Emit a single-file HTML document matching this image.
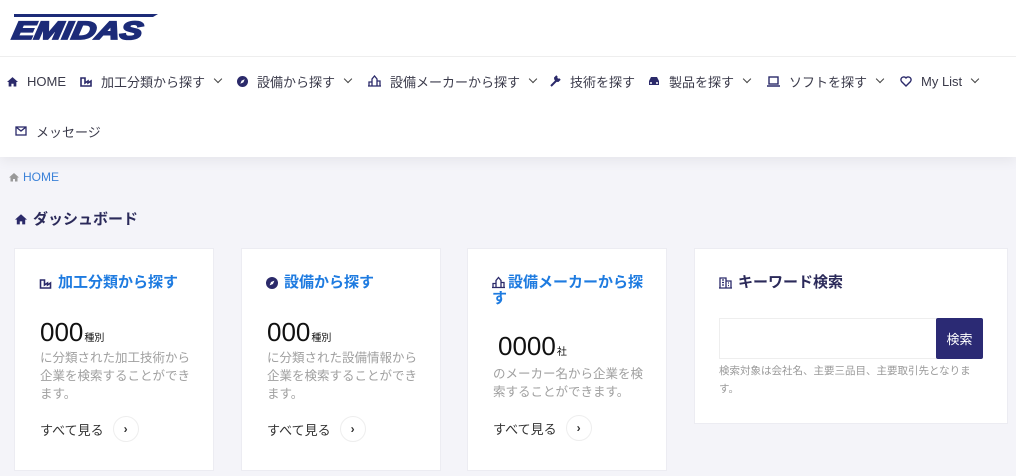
<!DOCTYPE html>
<html><head><meta charset="utf-8"><style>
*{margin:0;padding:0;box-sizing:border-box}
body{width:1016px;height:476px;overflow:hidden;background:#f4f4f9;font-family:"Liberation Sans","Noto Sans CJK JP",sans-serif;color:#333;position:relative}
.hdr{position:absolute;left:0;top:0;width:1016px;height:157px;background:#fff;box-shadow:0 4px 12px rgba(0,0,0,.06)}
.line{position:absolute;left:0;top:56px;width:1016px;height:1px;background:#eee}
.nav{position:absolute;font-size:13px;color:#3a3a4a;white-space:nowrap;display:flex;align-items:center;height:16px}
.nav svg{margin-right:9px}
.chev{display:inline-block;width:6px;height:6px;border-right:1.5px solid #444;border-bottom:1.5px solid #444;transform:rotate(45deg);margin-left:10px;margin-top:-4px}
.card{position:absolute;background:#fff;border:1px solid #ececf2}
.ct{position:absolute;left:24px;top:26px;font-size:15px;font-weight:bold;color:#1e7be0;line-height:16px;display:flex}
.num{position:absolute;left:25px;top:68px;font-size:26px;color:#111}
.num small{font-size:10px;margin-left:1px}
.desc{position:absolute;left:25px;font-size:12.5px;color:#a0a0a0;line-height:18px;width:160px}
.more{position:absolute;left:25px;font-size:13px;color:#333;display:flex;align-items:center}
.circ{width:26px;height:26px;border-radius:50%;border:1px solid #eee;margin-left:9px;display:flex;align-items:center;justify-content:center;font-size:12px;font-weight:bold}
</style></head><body>
<div class="hdr">
<svg style="position:absolute;left:8px;top:12px" width="150" height="30" viewBox="0 0 150 30"><path d="M6 2 L150 2 L145 5 L6 5Z" fill="#1c2b78"/><text x="8" y="27" font-family="Liberation Sans" font-weight="bold" font-style="italic" font-size="25" fill="#1c2b78" stroke="#1c2b78" stroke-width="1.8" textLength="130" lengthAdjust="spacingAndGlyphs" transform="skewX(-10)">EMIDAS</text></svg>
<div class="line"></div>
<div class="nav" style="left:7px;top:73px"><svg width="11" height="11" viewBox="0 0 10 10"><path d="M5 1L0 5.5H1.5V9.5H4V7H6V9.5H8.5V5.5H10Z" fill="#2b2a6a"/></svg>HOME</div>
<div class="nav" style="left:80px;top:73px"><svg width="12" height="11" viewBox="0 0 12 11"><path d="M1 2V10H11V5L8 7V5L5 7V2Z" fill="none" stroke="#2b2a6a" stroke-width="1.6"/></svg>加工分類から探す<span class="chev"></span></div>
<div class="nav" style="left:237px;top:73px"><svg width="11" height="11" viewBox="0 0 10 10"><circle cx="5" cy="5" r="5" fill="#2b2a6a"/><path d="M7 3L4.2 4.2 3 7 5.8 5.8Z" fill="#fff"/></svg>設備から探す<span class="chev"></span></div>
<div class="nav" style="left:368px;top:73px"><svg width="13" height="12" viewBox="0 0 13 12"><path d="M1 11V7H4V11M4 11V4L6.5 1L9 4V11M9 6H12V11M0 11H13" fill="none" stroke="#2b2a6a" stroke-width="1.3"/></svg>設備メーカーから探す<span class="chev"></span></div>
<div class="nav" style="left:549px;top:73px"><svg width="12" height="12" viewBox="0 0 12 12"><path d="M2 11L7 6M6 3A3 3 0 0 0 9 6L11 4A2 2 0 0 1 8 1Z" stroke="#2b2a6a" stroke-width="2" fill="#2b2a6a"/></svg>技術を探す</div>
<div class="nav" style="left:648px;top:73px"><svg width="12" height="11" viewBox="0 0 12 11"><path d="M1 5L3 1H9L11 5V9H1Z" fill="#2b2a6a"/><circle cx="3" cy="7" r="1" fill="#fff"/><circle cx="9" cy="7" r="1" fill="#fff"/></svg>製品を探す<span class="chev"></span></div>
<div class="nav" style="left:767px;top:73px"><svg width="13" height="11" viewBox="0 0 13 11"><rect x="2" y="1" width="9" height="7" fill="none" stroke="#2b2a6a" stroke-width="1.4"/><path d="M0 10H13" stroke="#2b2a6a" stroke-width="1.5"/></svg>ソフトを探す<span class="chev"></span></div>
<div class="nav" style="left:900px;top:73px"><svg width="12" height="11" viewBox="0 0 12 11"><path d="M6 10L1.5 5.5A2.6 2.6 0 0 1 6 2 2.6 2.6 0 0 1 10.5 5.5Z" fill="none" stroke="#2b2a6a" stroke-width="1.4"/></svg>My List<span class="chev"></span></div>
<div class="nav" style="left:15px;top:123px"><svg width="12" height="10" viewBox="0 0 12 10"><rect x="1" y="1" width="10" height="8" fill="none" stroke="#2b2a6a" stroke-width="1.3"/><path d="M1 1L6 5 11 1" fill="none" stroke="#2b2a6a" stroke-width="1.3"/></svg>メッセージ</div>
</div>
<div style="position:absolute;left:9px;top:170px;font-size:12px;color:#3b82d8;display:flex;align-items:center"><svg width="10" height="10" viewBox="0 0 10 10" style="margin-right:4px"><path d="M5 1L0 5.5H1.5V9.5H4V7H6V9.5H8.5V5.5H10Z" fill="#999"/></svg>HOME</div>
<div style="position:absolute;left:15px;top:208px;font-size:15px;font-weight:bold;color:#2b2a5a;display:flex;align-items:center"><svg width="12" height="12" viewBox="0 0 10 10" style="margin-right:6px"><path d="M5 1L0 5.5H1.5V9.5H4V7H6V9.5H8.5V5.5H10Z" fill="#2b2a6a"/></svg>ダッシュボード</div>

<div class="card" style="left:14px;top:248px;width:200px;height:223px">
<div class="ct"><svg width="13" height="11" viewBox="0 0 12 11" style="margin:3px 6px 0 0"><path d="M1 2V10H11V5L8 7V5L5 7V2Z" fill="none" stroke="#2b2a6a" stroke-width="1.6"/></svg>加工分類から探す</div>
<div class="num">000<small>種別</small></div>
<div class="desc" style="top:100px">に分類された加工技術から企業を検索することができます。</div>
<div class="more" style="top:167px">すべて見る<span class="circ">›</span></div>
</div>
<div class="card" style="left:241px;top:248px;width:200px;height:223px">
<div class="ct"><svg width="12" height="12" viewBox="0 0 10 10" style="margin:2px 6px 0 0"><circle cx="5" cy="5" r="5" fill="#2b2a6a"/><path d="M7 3L4.2 4.2 3 7 5.8 5.8Z" fill="#fff"/></svg>設備から探す</div>
<div class="num">000<small>種別</small></div>
<div class="desc" style="top:100px">に分類された設備情報から企業を検索することができます。</div>
<div class="more" style="top:167px">すべて見る<span class="circ">›</span></div>
</div>
<div class="card" style="left:467px;top:248px;width:200px;height:223px">
<div class="ct" style="width:160px;flex-wrap:wrap;display:block"><svg width="13" height="13" viewBox="0 0 13 12" style="margin-right:3px;vertical-align:-2px"><path d="M1 11V7H4V11M4 11V4L6.5 1L9 4V11M9 6H12V11M0 11H13" fill="none" stroke="#2b2a6a" stroke-width="1.3"/></svg>設備メーカーから探す</div>
<div class="num" style="left:30px;top:82px">0000<small>社</small></div>
<div class="desc" style="top:116px;width:155px">のメーカー名から企業を検索することができます。</div>
<div class="more" style="top:166px">すべて見る<span class="circ">›</span></div>
</div>
<div class="card" style="left:694px;top:248px;width:314px;height:176px">
<div class="ct" style="color:#2b2a5a"><svg width="13" height="12" viewBox="0 0 13 12" style="margin:2px 6px 0 0"><path d="M1 11V1H7V11M7 4H12V11M0 11H13M3 3H5M3 5.5H5M3 8H5M9 6H10M9 8.5H10" fill="none" stroke="#2b2a6a" stroke-width="1.3"/></svg>キーワード検索</div>
<div style="position:absolute;left:24px;top:69px;width:218px;height:41px;border:1px solid #eee;background:#fff"></div>
<div style="position:absolute;left:241px;top:69px;width:47px;height:41px;background:#2b2a74;color:#fff;font-size:13px;display:flex;align-items:center;justify-content:center;border-radius:2px">検索</div>
<div style="position:absolute;left:24px;top:113px;width:260px;font-size:10.5px;color:#999;line-height:18px">検索対象は会社名、主要三品目、主要取引先となります。</div>
</div>
</body></html>
